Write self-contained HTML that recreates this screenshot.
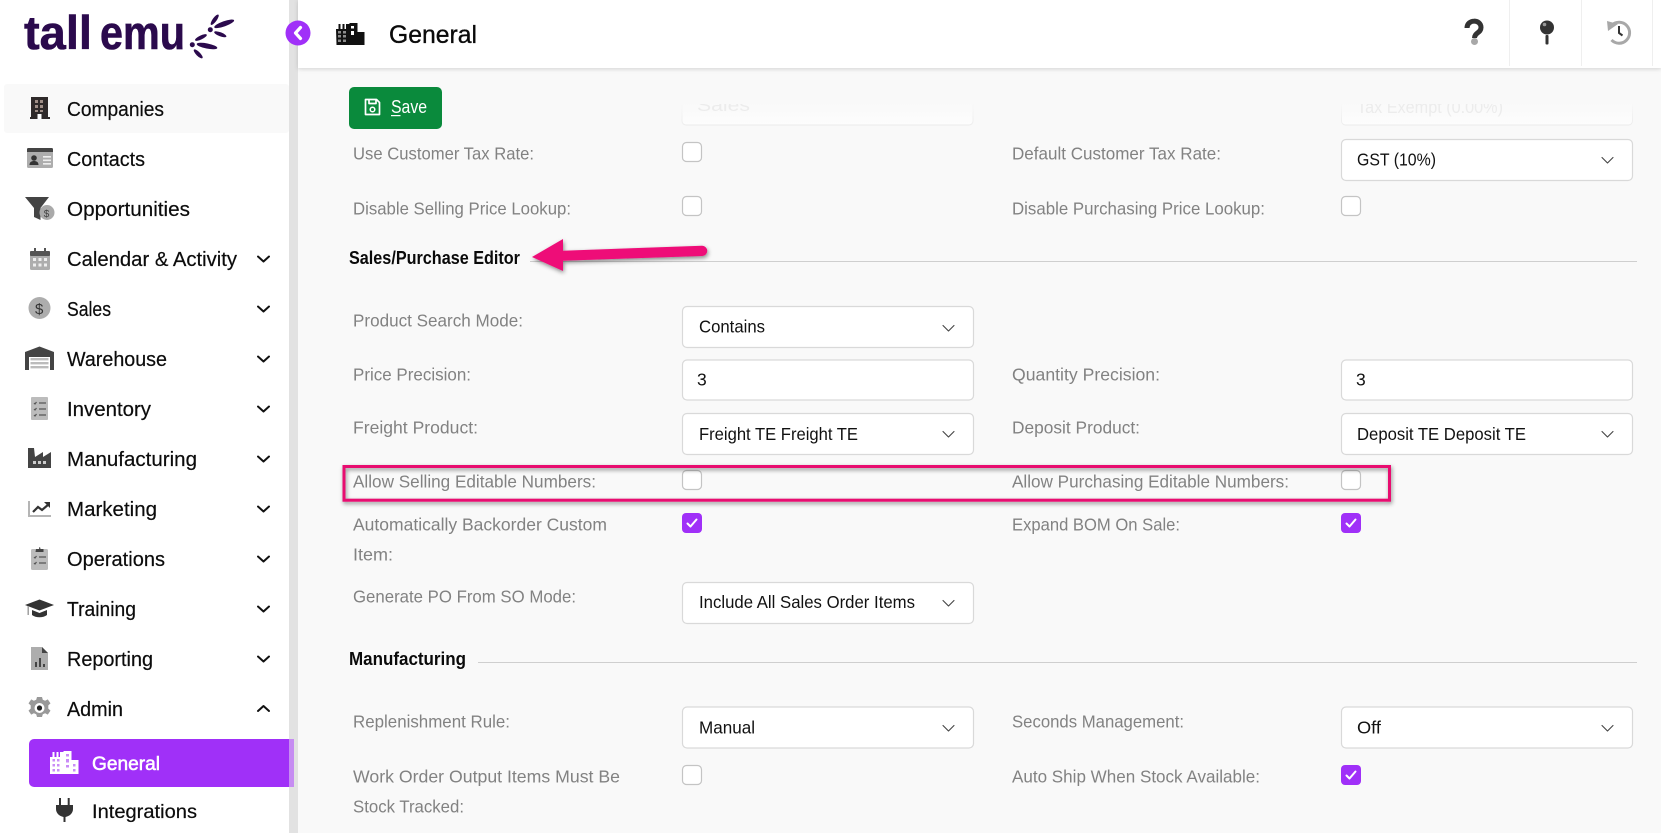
<!DOCTYPE html>
<html><head><meta charset="utf-8"><title>General</title>
<style>
html,body{margin:0;padding:0;background:#f9f9f9;width:1661px;height:833px;overflow:hidden}
svg{display:block}
text{font-family:"Liberation Sans",sans-serif;white-space:pre}
.n{font-size:20px;fill:#0c0c0c;stroke:#0c0c0c;stroke-width:.2}
.l{font-size:17.5px;fill:#828282}
.v{font-size:17.5px;fill:#111}
.h{font-size:18px;font-weight:bold;fill:#0a0a0a}
.box{fill:#fff;stroke:#d9d9d9;stroke-width:1.2}
.cb{fill:#fff;stroke:#c4c4c4;stroke-width:1.2}
.chk{fill:#a030f8}
.tick{fill:none;stroke:#fff;stroke-width:2;stroke-linecap:round;stroke-linejoin:round}
.nc{fill:none;stroke:#111;stroke-width:2;stroke-linecap:round;stroke-linejoin:round}
.sc{fill:none;stroke:#444;stroke-width:1.1;stroke-linecap:round;stroke-linejoin:round}
</style></head><body>
<svg width="1661" height="833" viewBox="0 0 1661 833" xmlns="http://www.w3.org/2000/svg">
<defs>
<filter id="hs" x="-5%" y="-20%" width="110%" height="150%"><feDropShadow dx="0" dy="1" stdDeviation="2" flood-color="#000" flood-opacity=".16"/></filter>
<filter id="ps" x="-5%" y="-30%" width="110%" height="170%"><feDropShadow dx="1" dy="2" stdDeviation="2" flood-color="#000" flood-opacity=".45"/></filter>
<linearGradient id="fade" x1="0" y1="0" x2="0" y2="1"><stop offset="0" stop-color="#f9f9f9"/><stop offset=".6" stop-color="#f9f9f9" stop-opacity=".97"/><stop offset=".9" stop-color="#f9f9f9" stop-opacity=".45"/><stop offset="1" stop-color="#f9f9f9" stop-opacity=".1"/></linearGradient>
</defs>

<rect width="1661" height="833" fill="#f9f9f9"/>

<!-- sidebar -->
<rect x="0" y="0" width="289" height="833" fill="#fff"/>
<rect x="289" y="0" width="9" height="833" fill="#e2e2e2"/>
<rect x="4" y="84" width="285" height="49" rx="3" fill="#f9f9f9"/>

<!-- logo -->
<text x="24" y="49" font-size="47" font-weight="bold" fill="#2b0a4d" stroke="#2b0a4d" stroke-width=".6" textLength="68" lengthAdjust="spacingAndGlyphs">tall</text>
<text x="100" y="49" font-size="47" font-weight="bold" fill="#2b0a4d" stroke="#2b0a4d" stroke-width=".6" textLength="85" lengthAdjust="spacingAndGlyphs">emu</text>
<g fill="#2b0a4d">
<ellipse cx="214.700" cy="19.700" rx="6.300" ry="2" transform="rotate(-54 214.700 19.700)"/>
<ellipse cx="224.200" cy="23.800" rx="10.500" ry="2.600" transform="rotate(-19.600 224.200 23.800)"/>
<ellipse cx="220.300" cy="34.300" rx="6.500" ry="2" transform="rotate(21 220.300 34.300)"/>
<circle cx="210.300" cy="29.700" r="2.500"/>
<ellipse cx="200.900" cy="37.500" rx="6.500" ry="2" transform="rotate(-25.600 200.900 37.500)"/>
<ellipse cx="207" cy="46" rx="10.500" ry="2.600" transform="rotate(11 207 46)"/>
<ellipse cx="198.200" cy="53.900" rx="6" ry="2" transform="rotate(45 198.200 53.900)"/>
<circle cx="192.300" cy="44.700" r="2.500"/>
</g>

<!-- nav text -->
<text class="n" x="67" y="116" textLength="97" lengthAdjust="spacingAndGlyphs">Companies</text>
<text class="n" x="67" y="166" textLength="78" lengthAdjust="spacingAndGlyphs">Contacts</text>
<text class="n" x="67" y="216" textLength="123" lengthAdjust="spacingAndGlyphs">Opportunities</text>
<text class="n" x="67" y="266" textLength="170" lengthAdjust="spacingAndGlyphs">Calendar &amp; Activity</text>
<text class="n" x="67" y="316" textLength="44" lengthAdjust="spacingAndGlyphs">Sales</text>
<text class="n" x="67" y="366" textLength="100" lengthAdjust="spacingAndGlyphs">Warehouse</text>
<text class="n" x="67" y="416" textLength="84" lengthAdjust="spacingAndGlyphs">Inventory</text>
<text class="n" x="67" y="466" textLength="130" lengthAdjust="spacingAndGlyphs">Manufacturing</text>
<text class="n" x="67" y="516" textLength="90" lengthAdjust="spacingAndGlyphs">Marketing</text>
<text class="n" x="67" y="566" textLength="98" lengthAdjust="spacingAndGlyphs">Operations</text>
<text class="n" x="67" y="616" textLength="69" lengthAdjust="spacingAndGlyphs">Training</text>
<text class="n" x="67" y="666" textLength="86" lengthAdjust="spacingAndGlyphs">Reporting</text>
<text class="n" x="67" y="716" textLength="56" lengthAdjust="spacingAndGlyphs">Admin</text>

<!-- nav chevrons -->
<path class="nc" d="M258 256.500l5.500 5 5.500-5M258 306.500l5.500 5 5.500-5M258 356.500l5.500 5 5.500-5M258 406.500l5.500 5 5.500-5M258 456.500l5.500 5 5.500-5M258 506.500l5.500 5 5.500-5M258 556.500l5.500 5 5.500-5M258 606.500l5.500 5 5.500-5M258 656.500l5.500 5 5.500-5M258 711l5.500-5 5.500 5"/>

<!-- nav icons -->
<!-- companies -->
<path fill="#2f2a2a" d="M31 97h17v20h2v2H30v-2h1z"/>
<path fill="#a08f88" d="M35 100h3v3h-3zM40 100h3v3h-3zM35 105h3v3h-3zM40 105h3v3h-3zM35 110h3v2h-3zM40 110h3v2h-3z"/>
<rect x="37.500" y="114" width="4" height="5" fill="#fff"/>
<!-- contacts -->
<rect x="27" y="148" width="26" height="20" rx="1.500" fill="#adadad"/>
<path fill="#444" d="M28.500 148h23a1.500 1.500 0 0 1 1.500 1.500V152H27v-2.500a1.500 1.500 0 0 1 1.500-1.500z"/>
<circle cx="34" cy="158" r="2.800" fill="#333"/><path fill="#333" d="M29.500 165c0-3 2-4 4.500-4s4.500 1 4.500 4z"/>
<path fill="#eee" d="M43 156h8v1.600h-8zM43 159.500h8v1.600h-8zM43 163h8v1.600h-8z"/>
<!-- opportunities -->
<path fill="#444" d="M25 197h24l-8.500 11v12l-6.500-3v-9z"/>
<circle cx="47" cy="212.500" r="7.500" fill="#aaa"/>
<text x="43.800" y="217" font-size="10" fill="#444">$</text>
<!-- calendar -->
<rect x="30" y="251" width="20" height="19" rx="1.500" fill="#adadad"/>
<rect x="30" y="251" width="20" height="5" rx="1" fill="#555"/>
<path fill="#555" d="M34 248h2v5h-2zM44 248h2v5h-2z"/>
<path fill="#eee" d="M33 258h3v3h-3zM38.500 258h3v3h-3zM44 258h3v3h-3zM33 263.500h3v3h-3zM38.500 263.500h3v3h-3zM44 263.500h3v3h-3z"/>
<!-- sales -->
<circle cx="39.500" cy="308" r="11" fill="#adadad"/>
<text x="35" y="314" font-size="15" fill="#333">$</text>
<!-- warehouse -->
<path fill="#444" d="M25 370v-18l14.500-5.500L54 352v18h-4v-13H29v13z"/>
<path fill="#bbb" d="M30.500 358h18v2.400h-18zM30.500 362h18v2.400h-18zM30.500 366h18v2.400h-18z"/>
<!-- inventory -->
<rect x="31" y="397" width="17" height="23" rx="1" fill="#bcbcbc"/>
<path fill="none" stroke="#555" stroke-width="1.200" d="M39 403h7M39 409h7M39 415h7M34 403l1 1 1.500-2M34 409l1 1 1.500-2M34 415l1 1 1.500-2"/>
<!-- manufacturing -->
<path fill="#444" d="M28 448h6l1 9 8-5v5l8-5v16H28z"/>
<path fill="#ccc" d="M33 461h3v3h-3zM38 461h3v3h-3zM43 461h3v3h-3z"/>
<!-- marketing -->
<path fill="none" stroke="#b5b5b5" stroke-width="2" d="M29 501v15h22"/>
<path fill="none" stroke="#333" stroke-width="2.200" d="M33 512l5-5 4 3 7-6"/><path fill="#333" d="M44 502h6v6z"/>
<!-- operations -->
<rect x="31" y="549" width="17" height="21" rx="1.500" fill="#bcbcbc"/>
<path fill="#444" d="M36 549h3l.5-2h.5l.5 2h3v3h-8z"/>
<path fill="none" stroke="#555" stroke-width="1.200" d="M39 557h7M39 563h7M34 557l1 1 1.500-2M34 563l1 1 1.500-2"/>
<!-- training -->
<path fill="#333" d="M25 605l14.500-5.500L54 605l-14.500 5.500z"/>
<path fill="#333" d="M32 610l7.500 3 7.500-3v5c-4 3-11 3-15 0z"/><path fill="#999" d="M27.500 606h1.400v9h-1.400z"/>
<!-- reporting -->
<path fill="#adadad" d="M31 647h11l6 6v17H31z"/><path fill="#444" d="M42 647l6 6h-6z"/>
<path fill="#444" d="M35 662h2v5h-2zM39 658h2v9h-2zM43 664h2v3h-2z"/>
<!-- admin -->
<path fill="#999" d="M37 697h5l.8 2.800 2.300 1 2.700-1.400 2.700 4-2.200 2v3.200l2.200 2-2.700 4-2.700-1.400-2.300 1-.8 2.800h-5l-.8-2.800-2.300-1-2.700 1.400-2.700-4 2.200-2v-3.200l-2.200-2 2.700-4 2.700 1.400 2.300-1z"/>
<circle cx="39.500" cy="708" r="5" fill="#fff"/><circle cx="39.500" cy="708" r="2.600" fill="#222"/>

<!-- general active -->
<rect x="29" y="739" width="265" height="48" rx="5" fill="#a030f8"/>
<rect x="289" y="739" width="5" height="48" fill="#c68cf2"/>
<path fill="#fff" d="M50 757h2.500v-5h2v5h2v-5h2v5h1.500v-5h3.500v-1h8v9h7v14H50z"/>
<path fill="#c98cf7" d="M52.500 759h2.500v2.500h-2.500zM57 759h2.500v2.500H57zM52.500 764h2.500v2.500h-2.500zM57 764h2.500v2.500H57zM52.500 769h2.500v2.500h-2.500zM57 769h2.500v2.500H57zM66 754h3v2.500h-3zM66 759h3v3.500h-3zM66 765h3v2.500h-3zM73 764h2.500v2.500H73zM73 769h2.500v2.500H73z"/>
<text x="92" y="770" font-size="19.500" fill="#fff" stroke="#fff" stroke-width=".55" textLength="68" lengthAdjust="spacingAndGlyphs">General</text>
<!-- plug -->
<path fill="#333" d="M59 798h2v7h6.700v-7h2v7H73v4c0 4-3 7-7.500 8v5h-2v-5c-4.500-1-7.500-4-7.500-8v-4h3z"/>
<text x="92" y="818" font-size="19.500" fill="#0c0c0c" stroke="#0c0c0c" stroke-width=".2" textLength="105" lengthAdjust="spacingAndGlyphs">Integrations</text>

<!-- ghost inputs -->
<rect x="682" y="85" width="291" height="40" rx="4" fill="#fff" stroke="#e6e6e6"/>
<rect x="1341.500" y="85" width="291" height="40" rx="4" fill="#fff" stroke="#e6e6e6"/>
<rect x="600" y="68" width="1061" height="60" fill="url(#fade)"/>
<text x="697" y="111" font-size="17.500" fill="#ececec" textLength="53" lengthAdjust="spacingAndGlyphs">Sales</text>
<text x="1357" y="113" font-size="17.500" fill="#ececec" textLength="146" lengthAdjust="spacingAndGlyphs">Tax Exempt (0.00%)</text>
<rect x="600" y="68" width="1061" height="36" fill="#f9f9f9"/>

<!-- top bar -->
<rect x="298" y="0" width="1363" height="68" fill="#fff" filter="url(#hs)"/>
<path fill="#111" d="M336 29h2.500v-5h2v5h2v-5h2v5h1.500v-5h3.500v-1h8v9h7v13h-28z"/>
<path fill="#8d8d8d" d="M338 31h3v2.500h-3zM343 31h3v2.500h-3zM338 35h3v2.500h-3zM343 35h3v2.500h-3zM338 39.500h3v2.500h-3zM343 39.500h3v2.500h-3z"/>
<path fill="#fff" d="M351 26h3v2.500h-3zM351 31h3v4h-3z"/>
<text x="389" y="43" font-size="25" fill="#0a0a0a" stroke="#0a0a0a" stroke-width=".35" textLength="88" lengthAdjust="spacingAndGlyphs">General</text>
<path stroke="#efefef" stroke-width="1" d="M1509.500 0v66M1581.500 0v66M1652.500 0v66"/>
<path fill="none" stroke="#333" stroke-width="5" d="M1467 28c0-9 14-9 14-.5 0 5.500-6.500 5-6.500 10.500"/>
<circle cx="1474.500" cy="41.500" r="3.500" fill="#a8a8a8"/>
<circle cx="1547" cy="27.500" r="7" fill="#333"/><circle cx="1544.500" cy="24.500" r="1.800" fill="#999"/>
<rect x="1545.500" y="35" width="3" height="9.500" rx="1" fill="#333"/>
<path fill="none" stroke="#a8a8a8" stroke-width="3" d="M1612 25A10.500 10.500 0 1 1 1611.500 40"/>
<path fill="#a8a8a8" d="M1607 21l11 3-10 7z"/>
<path fill="none" stroke="#333" stroke-width="2" d="M1619 26v7l3.500 2.500"/>

<!-- collapse -->
<circle cx="298" cy="33" r="12.500" fill="#a030f8"/>
<path fill="none" stroke="#fff" stroke-width="3.200" stroke-linecap="round" stroke-linejoin="round" d="M300.500 27.500l-5 5.500 5 5.500"/>

<!-- save -->
<rect x="349" y="87" width="93" height="42" rx="5" fill="#0a8a3c"/>
<path fill="none" stroke="#fff" stroke-width="1.700" stroke-linejoin="round" d="M365.500 99.500h11l3 3v12h-14zM369 99.500v4h7v-4"/>
<circle cx="372.500" cy="109.500" r="2.300" fill="none" stroke="#fff" stroke-width="1.500"/>
<text x="391" y="113" font-size="18" fill="#fff" textLength="36" lengthAdjust="spacingAndGlyphs">Save</text>
<rect x="391" y="115" width="9.500" height="1.200" fill="#fff"/>

<!-- labels left -->
<g transform="translate(0 .5)">
<text class="l" x="353" y="159" textLength="181" lengthAdjust="spacingAndGlyphs">Use Customer Tax Rate:</text>
<text class="l" x="353" y="214" textLength="218" lengthAdjust="spacingAndGlyphs">Disable Selling Price Lookup:</text>
<text class="l" x="353" y="326" textLength="170" lengthAdjust="spacingAndGlyphs">Product Search Mode:</text>
<text class="l" x="353" y="380" textLength="118" lengthAdjust="spacingAndGlyphs">Price Precision:</text>
<text class="l" x="353" y="433" textLength="125" lengthAdjust="spacingAndGlyphs">Freight Product:</text>
<text class="l" x="353" y="487" textLength="243" lengthAdjust="spacingAndGlyphs">Allow Selling Editable Numbers:</text>
<text class="l" x="353" y="530" textLength="254" lengthAdjust="spacingAndGlyphs">Automatically Backorder Custom</text>
<text class="l" x="353" y="560" textLength="40" lengthAdjust="spacingAndGlyphs">Item:</text>
<text class="l" x="353" y="602" textLength="223" lengthAdjust="spacingAndGlyphs">Generate PO From SO Mode:</text>
<text class="l" x="353" y="727" textLength="157" lengthAdjust="spacingAndGlyphs">Replenishment Rule:</text>
<text class="l" x="353" y="782" textLength="267" lengthAdjust="spacingAndGlyphs">Work Order Output Items Must Be</text>
<text class="l" x="353" y="812" textLength="111" lengthAdjust="spacingAndGlyphs">Stock Tracked:</text>

<!-- labels right -->
<text class="l" x="1012" y="159" textLength="209" lengthAdjust="spacingAndGlyphs">Default Customer Tax Rate:</text>
<text class="l" x="1012" y="214" textLength="253" lengthAdjust="spacingAndGlyphs">Disable Purchasing Price Lookup:</text>
<text class="l" x="1012" y="380" textLength="148" lengthAdjust="spacingAndGlyphs">Quantity Precision:</text>
<text class="l" x="1012" y="433" textLength="128" lengthAdjust="spacingAndGlyphs">Deposit Product:</text>
<text class="l" x="1012" y="487" textLength="277" lengthAdjust="spacingAndGlyphs">Allow Purchasing Editable Numbers:</text>
<text class="l" x="1012" y="530" textLength="168" lengthAdjust="spacingAndGlyphs">Expand BOM On Sale:</text>
<text class="l" x="1012" y="727" textLength="172" lengthAdjust="spacingAndGlyphs">Seconds Management:</text>
<text class="l" x="1012" y="782" textLength="248" lengthAdjust="spacingAndGlyphs">Auto Ship When Stock Available:</text>
</g>

<!-- checkboxes -->
<rect class="cb" x="682.500" y="142.500" width="19" height="19" rx="4"/>
<rect class="cb" x="682.500" y="196.500" width="19" height="19" rx="4"/>
<rect class="cb" x="1341.500" y="196.500" width="19" height="19" rx="4"/>
<rect class="cb" x="682.500" y="470.500" width="19" height="19" rx="4"/>
<rect class="cb" x="1341.500" y="470.500" width="19" height="19" rx="4"/>
<rect class="cb" x="682.500" y="765.500" width="19" height="19" rx="4"/>
<rect class="chk" x="682" y="513" width="20" height="20" rx="4"/><path class="tick" d="M687.500 523.500l3 3 6-7"/>
<rect class="chk" x="1341" y="513" width="20" height="20" rx="4"/><path class="tick" d="M1346.500 523.500l3 3 6-7"/>
<rect class="chk" x="1341" y="765" width="20" height="20" rx="4"/><path class="tick" d="M1346.500 775.500l3 3 6-7"/>

<!-- selects / inputs -->
<rect class="box" x="1341.500" y="139.500" width="291" height="41" rx="4.500"/>
<text class="v" x="1357" y="165.500" textLength="79" lengthAdjust="spacingAndGlyphs">GST (10%)</text>
<path class="sc" d="M1602 157.500l5.500 5.500 5.500-5.500"/>
<rect class="box" x="682.500" y="306.500" width="291" height="41" rx="4.500"/>
<text class="v" x="699" y="332.500" textLength="66" lengthAdjust="spacingAndGlyphs">Contains</text>
<path class="sc" d="M943 325.500l5.500 5.500 5.500-5.500"/>
<rect class="box" x="682.500" y="360" width="291" height="40" rx="4.500" stroke="#ccc"/>
<text class="v" x="697" y="385.500">3</text>
<rect class="box" x="1341.500" y="360" width="291" height="40" rx="4.500" stroke="#ccc"/>
<text class="v" x="1356" y="385.500">3</text>
<rect class="box" x="682.500" y="413.500" width="291" height="41" rx="4.500"/>
<text class="v" x="699" y="440" textLength="159" lengthAdjust="spacingAndGlyphs">Freight TE Freight TE</text>
<path class="sc" d="M943 431.500l5.500 5.500 5.500-5.500"/>
<rect class="box" x="1341.500" y="413.500" width="291" height="41" rx="4.500"/>
<text class="v" x="1357" y="440" textLength="169" lengthAdjust="spacingAndGlyphs">Deposit TE Deposit TE</text>
<path class="sc" d="M1602 431.500l5.500 5.500 5.500-5.500"/>
<rect class="box" x="682.500" y="582.500" width="291" height="41" rx="4.500"/>
<text class="v" x="699" y="608" textLength="216" lengthAdjust="spacingAndGlyphs">Include All Sales Order Items</text>
<path class="sc" d="M943 600.500l5.500 5.500 5.500-5.500"/>
<rect class="box" x="682.500" y="707" width="291" height="41" rx="4.500"/>
<text class="v" x="699" y="733.500" textLength="56" lengthAdjust="spacingAndGlyphs">Manual</text>
<path class="sc" d="M943 725.500l5.500 5.500 5.500-5.500"/>
<rect class="box" x="1341.500" y="707" width="291" height="41" rx="4.500"/>
<text class="v" x="1357" y="733.500" textLength="24" lengthAdjust="spacingAndGlyphs">Off</text>
<path class="sc" d="M1602 725.500l5.500 5.500 5.500-5.500"/>

<!-- section headings -->
<text class="h" x="349" y="264" textLength="171" lengthAdjust="spacingAndGlyphs">Sales/Purchase Editor</text>
<rect x="530" y="261" width="1107" height="1" fill="#cfcfcf"/>
<text class="h" x="349" y="665" textLength="117" lengthAdjust="spacingAndGlyphs">Manufacturing</text>
<rect x="478" y="662" width="1159" height="1" fill="#cfcfcf"/>

<!-- annotations -->
<path fill="#ee0a78" filter="url(#ps)" d="M532 257L563 239V250.700L702 245.800a5 5 0 0 1 .3 10.200L563 260.700V271Z"/>
<rect x="344" y="466.500" width="1045.500" height="33.700" fill="none" stroke="#e8086f" stroke-width="3" filter="url(#ps)"/>
</svg>
</body></html>
